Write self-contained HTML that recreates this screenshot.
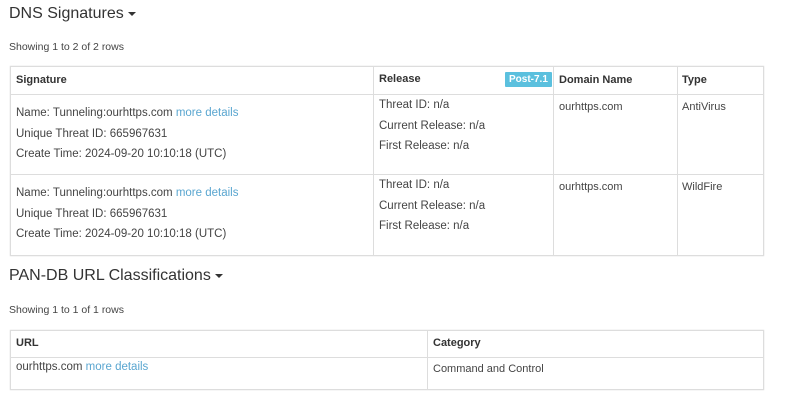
<!DOCTYPE html>
<html><head><style>
body{margin:0;width:800px;height:420px;background:#fff;font-family:"Liberation Sans",sans-serif;color:#333;position:relative;overflow:hidden}
.a{position:absolute;white-space:nowrap}
h2{position:absolute;margin:0;font-weight:normal;font-size:16px;color:#333}
.caret{display:inline-block;width:0;height:0;border-left:4px solid transparent;border-right:4px solid transparent;border-top:4px solid #333;vertical-align:middle;margin-left:4px}
.s{font-size:10.5px;color:#444}
.box{position:absolute;border:1px solid #ddd;box-shadow:0 0 1px #ccc}
.hl{position:absolute;height:1px;background:#ddd}
.vl{position:absolute;width:1px;background:#ddd}
.th{font-size:11px;font-weight:bold;color:#333}
.td{font-size:11.5px;color:#444}
.l{color:#5aa6d0}
.badge{position:absolute;background:#5bc0de;color:#fff;font-size:10px;font-weight:bold;padding:2px 4px;border-radius:1px}
</style></head><body>
<h2 style="left:9px;top:5px">DNS Signatures<span class="caret"></span></h2>
<div class="a s" style="left:9px;top:41px">Showing 1 to 2 of 2 rows</div>
<div class="box" style="left:10px;top:66px;width:752px;height:188px"></div>
<div class="hl" style="left:10px;top:94px;width:753px"></div>
<div class="hl" style="left:10px;top:174px;width:753px"></div>
<div class="vl" style="left:373px;top:66px;height:189px"></div>
<div class="vl" style="left:553px;top:66px;height:189px"></div>
<div class="vl" style="left:677px;top:66px;height:189px"></div>
<div class="a th" style="left:16px;top:74px">Signature</div>
<div class="a th" style="left:379px;top:73px">Release</div>
<div class="badge" style="left:505px;top:72px">Post-7.1</div>
<div class="a th" style="left:559px;top:74px">Domain Name</div>
<div class="a th" style="left:682px;top:74px">Type</div>

<div class="a td" style="left:16px;top:103px;line-height:20.5px">Name: Tunneling:ourhttps.com <span class="l">more details</span><br>Unique Threat ID: 665967631<br>Create Time: 2024-09-20 10:10:18 (UTC)</div>
<div class="a td" style="left:379px;top:95px;line-height:20.5px">Threat ID: n/a<br>Current Release: n/a<br>First Release: n/a</div>
<div class="a td" style="left:559px;top:101px;font-size:11px">ourhttps.com</div>
<div class="a td" style="left:682px;top:101px;font-size:11px">AntiVirus</div>

<div class="a td" style="left:16px;top:183px;line-height:20.5px">Name: Tunneling:ourhttps.com <span class="l">more details</span><br>Unique Threat ID: 665967631<br>Create Time: 2024-09-20 10:10:18 (UTC)</div>
<div class="a td" style="left:379px;top:175px;line-height:20.5px">Threat ID: n/a<br>Current Release: n/a<br>First Release: n/a</div>
<div class="a td" style="left:559px;top:181px;font-size:11px">ourhttps.com</div>
<div class="a td" style="left:682px;top:181px;font-size:11px">WildFire</div>

<h2 style="left:9px;top:267px">PAN-DB URL Classifications<span class="caret"></span></h2>
<div class="a s" style="left:9px;top:304px">Showing 1 to 1 of 1 rows</div>
<div class="box" style="left:10px;top:330px;width:752px;height:58px"></div>
<div class="hl" style="left:10px;top:357px;width:753px"></div>
<div class="vl" style="left:427px;top:330px;height:59px"></div>
<div class="a th" style="left:16px;top:337px">URL</div>
<div class="a th" style="left:433px;top:337px">Category</div>
<div class="a td" style="left:16px;top:361px">ourhttps.com <span class="l">more details</span></div>
<div class="a td" style="left:433px;top:363px;font-size:11px">Command and Control</div>
</body></html>
